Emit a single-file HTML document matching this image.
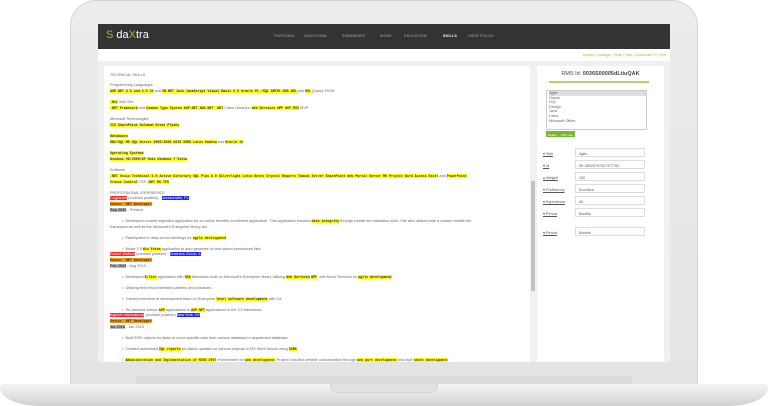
<!DOCTYPE html>
<html><head><meta charset="utf-8"><style>
*{margin:0;padding:0;box-sizing:border-box}
body{width:768px;height:406px;background:#fff;position:relative;overflow:hidden;font-family:"Liberation Sans",sans-serif}
.lid{position:absolute;left:70px;top:0;width:628px;height:386px;background:linear-gradient(#ececec,#e4e4e4);border-radius:26px 26px 4px 4px;border:1px solid #d4d4d4}
.strip{position:absolute;left:136px;top:376px;width:496px;height:9px;background:#dcdcdc;border-radius:0 0 4px 4px}
.base{position:absolute;left:0;top:384px;width:768px;height:22px;background:linear-gradient(#f3f3f3,#e0e0e0 60%,#cfcfcf);border-radius:4px 4px 40px 40px/4px 4px 18px 18px}
.notch{position:absolute;left:330px;top:384px;width:108px;height:9px;background:#e2e2e2;border-radius:0 0 8px 8px;border:1px solid #d2d2d2;border-top:none}
.screen{position:absolute;left:98px;top:24px;width:572px;height:338px;background:#f0f0f0;overflow:hidden}
.hdr{position:absolute;left:0;top:0;width:572px;height:25px;background:#333}
.logo{position:absolute;left:8px;top:5px;color:#fff;font-size:11px}
.logo b{color:#8dc63f;font-weight:normal}
.nav{position:absolute;top:10px;font-size:3.6px;color:#aaa;letter-spacing:.2px}
.wbar{position:absolute;left:0;top:25px;width:572px;height:12px;background:#fff}
.links{position:absolute;right:4px;top:4px;font-size:3.6px;color:#8dc63f}
.lp{position:absolute;left:6px;top:42px;width:428px;height:300px;background:#fff}
.sb{position:absolute;left:426px;top:0;width:6px;height:300px;background:#f1f1f1}
.sb i{position:absolute;left:1px;top:115px;width:4px;height:110px;background:#c1c1c1}
.t{position:absolute;left:6px;font-size:3.8px;color:#666;white-space:nowrap}
.y{background:#ff0;color:#333;font-family:"Liberation Mono",monospace;font-weight:bold;font-size:3.3px}
.r{background:#f22;color:#fff}
.bl{background:#22f;color:#fff}
.o{background:#f90;color:#333;font-family:"Liberation Mono",monospace;font-weight:bold;font-size:3.3px}
.g{background:#bbb;color:#333;font-weight:bold}
.b{left:18px}
.rp{position:absolute;left:439px;top:42px;width:127px;height:300px;background:#fff}
.rms{position:absolute;left:0;width:127px;top:5px;text-align:center;font-size:5.5px;color:#444}
.gl{position:absolute;left:12px;top:15px;width:100px;height:2px;background:#a9d46f}
.list{position:absolute;left:9px;top:24px;width:101px;height:40px;border:1px solid #ccc;font-size:3.8px;color:#666;line-height:4.6px;padding-left:2px}
.list div:first-child{background:#ddd}
.btn{position:absolute;top:65px;height:6px;background:#7ab530;color:#fff;font-size:3px;padding:1.5px 2px}
.lab{position:absolute;left:6px;font-size:3.8px;color:#555;text-decoration:underline}
.fld{position:absolute;left:38px;width:70px;height:9px;border:1px solid #ddd;font-size:3.6px;color:#555;padding:2.5px 3px}
</style></head><body>
<div class="lid"></div>
<div class="strip"></div>
<div class="base"></div>
<div class="notch"></div>
<div class="screen">
 <div class="hdr"><div class="logo"><b>S</b> da<b>X</b>tra</div>
  <div class="nav" style="left:176px">PERSONAL</div><div class="nav" style="left:206px">ADDITIONAL</div><div class="nav" style="left:244px">SUMMARIES</div><div class="nav" style="left:282px">WORK</div><div class="nav" style="left:306px">EDUCATION</div><div class="nav" style="left:345px;color:#fff;font-weight:bold">SKILLS</div><div class="nav" style="left:370px">USER FIELDS</div>
 </div>
 <div class="wbar"><div class="links">Update | Unstage | Flush | Skip | Download CV | Exit</div></div>
 <div class="lp">
  <div class="t" style="top:7px">TECHNICAL SKILLS</div>
  <div class="t" style="top:17px">Programming Languages</div>
  <div class="t" style="top:23px"><span class="y">ASP.NET 3.5 and 4.0 C#</span> and <span class="y">VB.NET Java JavaScript Visual Basic 6.0 Oracle PL /SQL DHTML DOS XML</span> and <span class="y">SSL</span> jQuery JSON</div>
  <div class="t" style="top:34px"><span class="y">.Net</span> Skill Set:</div>
  <div class="t" style="top:40px"><span class="y">.NET Framework</span> and <span class="y">Common Type System ASP.NET ADO.NET .NET</span> Class Libraries, <span class="y">Web Services WPF WCF MVC</span> MVP</div>
  <div class="t" style="top:51px">Microsoft Technologies</div>
  <div class="t" style="top:57px"><span class="y">IIS SharePoint Solomon Great Plains</span></div>
  <div class="t" style="top:68px"><span class="y">Databases</span></div>
  <div class="t" style="top:74px"><span class="y">DB2/SQL MS SQL Server 2005/2008 SSIS SSRS Lotus Emdeva</span> and <span class="y">Oracle 10</span></div>
  <div class="t" style="top:85px"><span class="y">Operating Systems</span></div>
  <div class="t" style="top:91px"><span class="y">Windows 98/2000/XP Unix Windows 7 Vista</span></div>
  <div class="t" style="top:102px">Software</div>
  <div class="t" style="top:108px"><span class="y">.NET Visio Technical 5.0 Active Directory SQL Plus 8.0 Silverlight Lotus Notes Crystal Reports Tomcat Server SharePoint Web Portal Server MS Project Word Access Excel</span> and <span class="y">PowerPoint</span></div>
  <div class="t" style="top:114px"><span class="y">Cruise Control</span> TDF <span class="y">.NET MS TFS</span></div>
  <div class="t" style="top:125px">PROFESSIONAL EXPERIENCE</div>
  <div class="t" style="top:130px"><span class="r">Cognizant</span> (contract position) - <span class="bl">Jacksonville, FL</span></div>
  <div class="t" style="top:136px"><span class="o">Senior .NET Developer</span></div>
  <div class="t" style="top:142px"><span class="g">Sep 2020</span> - Present</div>
  <div class="t b" style="top:153px">•&nbsp; Developed content migration application for an online benefits enrollment application. This application ensured <span class="y">data integrity</span> through middle tier validation rules. Site also utilized both a custom middle-tier</div>
  <div class="t" style="top:159px">framework as well as the Microsoft's Enterprise library aid.</div>
  <div class="t b" style="top:170px">•&nbsp; Participated in daily scrum meetings for <span class="y">agile development</span></div>
  <div class="t b" style="top:181px">•&nbsp; Wrote 3.5 <span class="y">Win Forms</span> application to auto generate c# and stored procedures files.</div>
  <div class="t" style="top:186px"><span class="r">Robert Walters</span> (contract position) - <span class="bl">Downers Grove, IL</span></div>
  <div class="t" style="top:192px"><span class="o">Senior .NET Developer</span></div>
  <div class="t" style="top:198px"><span class="g">Feb 2019</span> - Aug 2019</div>
  <div class="t b" style="top:209px">•&nbsp; Developed <span class="y">N-Tier</span> application with <span class="y">SOA</span> framework built on Microsoft's Enterprise library utilizing <span class="y">Web Services</span> <span class="y">WPF</span>, with Mock Services for <span class="y">agile development</span>.</div>
  <div class="t b" style="top:220px">•&nbsp; Utilizing best recommended patterns and practices.</div>
  <div class="t b" style="top:231px">•&nbsp; Trained members of development team on Enterprise <span class="y">level software development</span> with C#.</div>
  <div class="t b" style="top:242px">•&nbsp; Re-factored classic <span class="y">ASP</span> applications to <span class="y">ASP.NET</span> applications in the 3.5 framework.</div>
  <div class="t" style="top:247px"><span class="r">Isgenet International</span> (contract position) <span class="bl">New York, NY</span></div>
  <div class="t" style="top:253px"><span class="o">Senior .NET Developer</span></div>
  <div class="t" style="top:259px"><span class="g">Jul 2018</span> - Jan 2019</div>
  <div class="t b" style="top:270px">•&nbsp; Built SSIS objects for tasks to move specific data from various database to department database.</div>
  <div class="t b" style="top:281px">•&nbsp; Created automated <span class="y">SQL reports</span> for status updates on various projects in MS Word format using <span class="y">SSRS</span>.</div>
  <div class="t b" style="top:292px">•&nbsp; <span class="y">Administration and Implementation of MOSS 2007</span> environment for <span class="y">web development</span>. Project included website customization through <span class="y">web part development</span> and style <span class="y">sheet development</span>.</div>
  <div class="sb"><i></i></div>
 </div>
 <div class="rp">
  <div class="rms">RMS Id: <b>0036S00005dLtiuQAK</b></div>
  <div class="gl"></div>
  <div class="list"><div>Agile</div><div>Oracle</div><div>SQL</div><div>Design</div><div>Java</div><div>Lotus</div><div>Microsoft Office</div></div>
  <div class="btn" style="left:9px">Delete</div><div class="btn" style="left:22px">Add new</div>
  <div class="lab" style="top:85px">▾ Skill</div><div class="fld" style="top:82px">Agile</div>
  <div class="lab" style="top:97px">▾ Id</div><div class="fld" style="top:94px">SK-36020797027377793</div>
  <div class="lab" style="top:109px">▴ Weight</div><div class="fld" style="top:106px">100</div>
  <div class="lab" style="top:121px">▾ Proficiency</div><div class="fld" style="top:118px">Excellent</div>
  <div class="lab" style="top:133px">▾ Experience</div><div class="fld" style="top:130px">60</div>
  <div class="lab" style="top:145px">▾ Period</div><div class="fld" style="top:142px">Months</div>
  <div class="lab" style="top:164px">▾ Period</div><div class="fld" style="top:161px">Months</div>
 </div>
</div>
</body></html>
